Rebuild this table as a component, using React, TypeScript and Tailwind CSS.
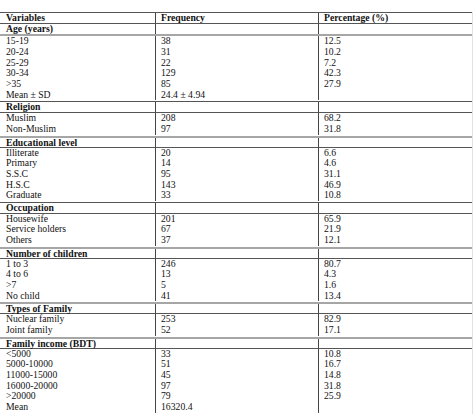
import React from "react";

type Section = { title: string; rows: [string, string, string][]; thickTop: boolean; thickBelow?: boolean };

const sections: Section[] = [
  {
    title: "Age (years)",
    thickTop: false,
    thickBelow: true,
    rows: [
      ["15-19", "38", "12.5"],
      ["20-24", "31", "10.2"],
      ["25-29", "22", "7.2"],
      ["30-34", "129", "42.3"],
      [">35", "85", "27.9"],
      ["Mean ± SD", "24.4 ± 4.94", ""],
    ],
  },
  {
    title: "Religion",
    thickTop: false,
    rows: [
      ["Muslim", "208", "68.2"],
      ["Non-Muslim", "97", "31.8"],
    ],
  },
  {
    title: "Educational level",
    thickTop: true,
    rows: [
      ["Illiterate", "20", "6.6"],
      ["Primary", "14", "4.6"],
      ["S.S.C", "95", "31.1"],
      ["H.S.C", "143", "46.9"],
      ["Graduate", "33", "10.8"],
    ],
  },
  {
    title: "Occupation",
    thickTop: false,
    rows: [
      ["Housewife", "201", "65.9"],
      ["Service holders", "67", "21.9"],
      ["Others", "37", "12.1"],
    ],
  },
  {
    title: "Number of children",
    thickTop: true,
    rows: [
      ["1 to 3", "246", "80.7"],
      ["4 to 6", "13", "4.3"],
      [">7", "5", "1.6"],
      ["No child", "41", "13.4"],
    ],
  },
  {
    title: "Types of Family",
    thickTop: true,
    rows: [
      ["Nuclear family", "253", "82.9"],
      ["Joint family", "52", "17.1"],
    ],
  },
  {
    title: "Family income (BDT)",
    thickTop: true,
    rows: [
      ["<5000", "33", "10.8"],
      ["5000-10000", "51", "16.7"],
      ["11000-15000", "45", "14.8"],
      ["16000-20000", "97", "31.8"],
      [">20000", "79", "25.9"],
      ["Mean", "16320.4", ""],
    ],
  },
];

export default function App() {
  return (
    <div
      className="w-[474px] h-[414px] bg-white overflow-hidden flex text-[#111] text-[9.7px] leading-[10.67px]"
      style={{ fontFamily: '"Liberation Serif", "Times New Roman", serif' }}
    >
      <div className="w-[472px] flex-none pt-[12px]">
        <div className="flex border-t border-[#555] h-[11.3px]">
          <div className="w-[155px] flex-none pl-[6px] font-bold whitespace-nowrap">Variables</div>
          <div className="w-[163px] flex-none border-l border-[#444] pl-[5px] font-bold">Frequency</div>
          <div className="flex-1 border-l border-[#444] pl-[5px] font-bold">Percentage (%)</div>
        </div>
        {sections.map((s) => (
          <div key={s.title}>
            <div
              className={
                "flex h-[11px] " +
                (s.thickTop ? "border-t-2 border-[#a6a6a6]" : "border-t border-[#555]")
              }
            >
              <div className="w-[155px] flex-none pl-[6px] font-bold whitespace-nowrap">{s.title}</div>
              <div className="w-[163px] flex-none border-l border-[#444]" />
              <div className="flex-1 border-l border-[#444]" />
            </div>
            <div
              className={
                "pb-[1px] " +
                (s.thickBelow ? "border-t-2 border-[#a6a6a6]" : "border-t border-[#555]")
              }
            >
              {s.rows.map((r) => (
                <div key={r[0]} className="flex h-[10.67px]">
                  <div className="w-[155px] flex-none pl-[6px] whitespace-nowrap">{r[0]}</div>
                  <div className="w-[163px] flex-none border-l border-[#444] pl-[5px] whitespace-nowrap">{r[1]}</div>
                  <div className="flex-1 border-l border-[#444] pl-[5px] whitespace-nowrap">{r[2]}</div>
                </div>
              ))}
            </div>
          </div>
        ))}
      </div>
      <div className="w-[1px] flex-none mt-[12px] bg-[#e2e2e2]" />
    </div>
  );
}
